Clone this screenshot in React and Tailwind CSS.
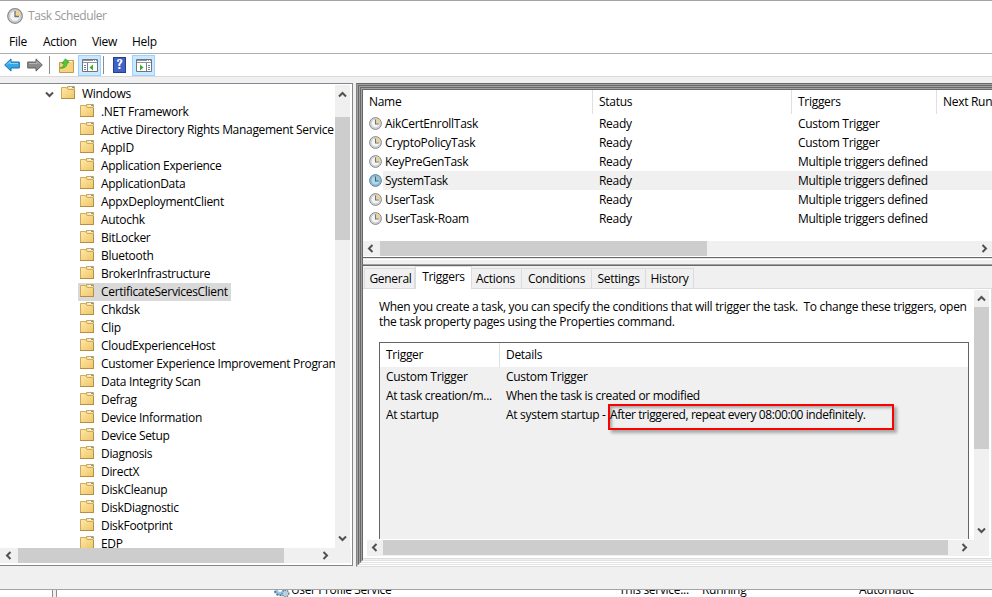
import React from 'react';

const folders = [
  '.NET Framework',
  'Active Directory Rights Management Service',
  'AppID',
  'Application Experience',
  'ApplicationData',
  'AppxDeploymentClient',
  'Autochk',
  'BitLocker',
  'Bluetooth',
  'BrokerInfrastructure',
  'CertificateServicesClient',
  'Chkdsk',
  'Clip',
  'CloudExperienceHost',
  'Customer Experience Improvement Program',
  'Data Integrity Scan',
  'Defrag',
  'Device Information',
  'Device Setup',
  'Diagnosis',
  'DirectX',
  'DiskCleanup',
  'DiskDiagnostic',
  'DiskFootprint',
  'EDP',
];

const tasks = [
  { name: 'AikCertEnrollTask', trigger: 'Custom Trigger' },
  { name: 'CryptoPolicyTask', trigger: 'Custom Trigger' },
  { name: 'KeyPreGenTask', trigger: 'Multiple triggers defined' },
  { name: 'SystemTask', trigger: 'Multiple triggers defined', selected: true },
  { name: 'UserTask', trigger: 'Multiple triggers defined' },
  { name: 'UserTask-Roam', trigger: 'Multiple triggers defined' },
];

const tabs = [
  { label: 'General', width: 'w-[51px] pl-[2px]' },
  { label: 'Triggers', width: 'w-[57px]', active: true },
  { label: 'Actions', width: 'w-[50px] pr-[2px]' },
  { label: 'Conditions', width: 'w-[70px]' },
  { label: 'Settings', width: 'w-[54px]' },
  { label: 'History', width: 'w-[48px]' },
];

const FolderIcon = () => (
  <svg width="15" height="14" viewBox="0 0 15 14" className="-mt-[2px] shrink-0">
    <defs>
      <linearGradient id="folder" x1="0" y1="0" x2="1" y2="1">
        <stop offset="0" stopColor="#ffe9a8" />
        <stop offset="1" stopColor="#efc567" />
      </linearGradient>
    </defs>
    <path d="M6.5 3V.5H13.5V3" fill="#f7e3ae" stroke="#c9a458" />
    <path d="M9 1.5H11" stroke="#fff" />
    <path d="M11 1.5H13" stroke="#4aa3dc" />
    <path d="M.5 1.5H5.5L7 3.5H13.5V12.5H.5Z" fill="url(#folder)" stroke="#d0aa5c" />
    <path d="M0 12.5H14M13.5 4V13" stroke="#b58f45" />
  </svg>
);

const ClockIcon = ({ size = 13, selected }) => (
  <svg width={size} height={size} viewBox="0 0 16 16" className="shrink-0">
    <circle cx="8" cy="8" r="7.3" fill={selected ? '#8db9d8' : '#d5d7d9'} stroke={selected ? '#5d8aa8' : '#88898b'} strokeWidth="1.2" />
    <circle cx="8" cy="8" r="5.4" fill={selected ? '#b5d7ec' : '#f3f4f5'} stroke={selected ? '#7da8c5' : '#b5b8ba'} strokeWidth=".7" />
    <path d="M8 8V2.4A5.6 5.6 0 0 1 13.6 8Z" fill={selected ? '#9fc4cf' : '#f1d38a'} />
    <path d="M8 3V8.5H12" fill="none" stroke={selected ? '#35617c' : '#6a747d'} strokeWidth="1.3" />
  </svg>
);

const arrowPaths = {
  up: 'M1 6.5L4.5 3L8 6.5',
  down: 'M1 2.5L4.5 6L8 2.5',
  left: 'M6.5 1L3 4.5L6.5 8',
  right: 'M2.5 1L6 4.5L2.5 8',
};

const Chevron = ({ dir, className = '' }) => (
  <svg width="9" height="9" viewBox="0 0 9 9" className={`shrink-0 ${className}`}>
    <path d={arrowPaths[dir]} fill="none" stroke="#505050" strokeWidth="2" />
  </svg>
);

const BlueArrow = () => (
  <svg width="16" height="14" viewBox="0 0 16 14">
    <path d="M.7 7L7 .9V4H15.3V10H7V13.1Z" fill="#35a7e8" stroke="#1b6ca8" />
    <path d="M3 6.5L6 3.5V5.5H14" fill="none" stroke="#8bd4fa" />
  </svg>
);

const GrayArrow = () => (
  <svg width="16" height="14" viewBox="0 0 16 14">
    <path d="M15.3 7L9 .9V4H.7V10H9V13.1Z" fill="#8b8b8b" stroke="#606060" />
    <path d="M2 5.5H10V3.5L13 6.5" fill="none" stroke="#b5b5b5" />
  </svg>
);

const UpFolderIcon = () => (
  <svg width="15" height="15" viewBox="0 0 15 15">
    <path d="M.5 4.5H8V2.5H14.5V14.5H.5Z" fill="#f5d47d" stroke="#c39a49" />
    <path d="M10 3.5H13" stroke="#fff" />
    <path d="M1 10C3.5 9.5 4.8 8 5 5.5L3 5.3L6.5 .8L10 4.5L8 5C8 8.5 5.5 10.8 1 10Z" fill="#52c93a" stroke="#2c9a22" strokeWidth=".7" />
  </svg>
);

const PaneIcon = ({ right }) => (
  <svg width="16" height="13" viewBox="0 0 16 13">
    <path d="M.5 .5H15.5V12.5H.5Z" fill="#fff" stroke="#70757c" />
    <path d="M1 1.5H15M1 3.5H15" stroke="#8f959c" />
    <path d="M11 1.5H12M13 1.5H14" stroke="#fff" />
    {right ? (
      <>
        <path d="M10.5 4V12M12 6.5H14M12 8.5H14M12 10.5H14" stroke="#70809a" />
        <path d="M4 5.5V11.5L7.5 8.5Z" fill="#3cab2e" />
      </>
    ) : (
      <>
        <path d="M5.5 4V12M2 6.5H4M2 8.5H4M2 10.5H4" stroke="#70809a" />
        <path d="M11 5.5V11.5L7.5 8.5Z" fill="#3cab2e" />
      </>
    )}
  </svg>
);

const GearsIcon = () => (
  <svg width="17" height="16" viewBox="0 0 17 16" className="shrink-0">
    <circle cx="7" cy="8" r="5.2" fill="#9bc3e2" stroke="#527f9f" strokeWidth="2" strokeDasharray="2 1.2" />
    <circle cx="7" cy="8" r="2" fill="#fff" />
    <circle cx="12.5" cy="11.5" r="3.3" fill="#b7d0e1" stroke="#62839a" strokeWidth="1.4" strokeDasharray="1.4 1" />
  </svg>
);

const HScroll = ({ thumb, className = '', end = 'mr-[5px]' }) => (
  <div className={`flex h-[15px] items-center bg-[#f0f0f0] ${className}`}>
    <Chevron dir="left" className="mr-[5px] ml-[3px]" />
    <div className={`h-full bg-[#cdcdcd] ${thumb}`} />
    <Chevron dir="right" className={`ml-auto ${end}`} />
  </div>
);

const VScroll = ({ thumb, className = '' }) => (
  <div className={`flex w-[15px] flex-col items-center bg-[#f0f0f0] ${className}`}>
    <Chevron dir="up" className="mt-1 mb-1" />
    <div className={`w-full bg-[#cdcdcd] ${thumb}`} />
    <Chevron dir="down" className="mt-auto mb-[5px]" />
  </div>
);

const Tree = () => (
  <div className="flex w-[353px] shrink-0 flex-col border-t border-r border-b border-[#828790] bg-white pt-px pr-px tracking-[-0.31px]">
    <div className="flex h-[463px]">
      <div className="w-[335px] overflow-hidden">
        <div className="flex h-[18px] items-center pl-[45px]">
          <Chevron dir="down" className="mt-px mr-[7px]" />
          <FolderIcon />
          <span className="ml-[6px]">Windows</span>
        </div>
        {folders.map((name) => (
          <div key={name} className="flex h-[18px] items-center pl-[78px]">
            <div className={`flex h-full items-center pr-[3px] pl-[2px] ${name === 'CertificateServicesClient' ? 'bg-[#d9d9d9]' : ''}`}>
              <FolderIcon />
              <span className="ml-[6px]">{name}</span>
            </div>
          </div>
        ))}
      </div>
      <VScroll className="pt-px" thumb="mt-[14px] h-[123px]" />
    </div>
    <div className="flex bg-[#f0f0f0]">
      <HScroll className="w-[335px] pl-px" thumb="w-[266px]" />
    </div>
  </div>
);

const TaskList = () => (
  <div className="flex h-[168px] flex-col border-b border-[#696969] bg-white">
    <div className="flex h-6 items-center">
      <span className="w-[229px] pl-[6px]">Name</span>
      <span className="flex h-6 w-[199px] items-center border-l border-[#e0e0e0] pl-[6px]">Status</span>
      <span className="flex h-6 w-[145px] items-center border-l border-[#e0e0e0] pl-[6px]">Triggers</span>
      <span className="flex h-6 flex-1 items-center overflow-hidden border-l border-[#e0e0e0] pl-[6px]">Next Run</span>
    </div>
    {tasks.map((task) => (
      <div key={task.name} className="flex h-[19px] items-center pl-[6px] leading-[19px]">
        <ClockIcon selected={task.selected} />
        <div className={`ml-px flex h-full flex-1 items-center pl-[2px] ${task.selected ? 'bg-[#f0f0f0]' : ''}`}>
          <span className="w-[214px]">{task.name}</span>
          <span className="w-[199px]">Ready</span>
          <span>{task.trigger}</span>
        </div>
      </div>
    ))}
    <HScroll className="mt-auto mb-px" thumb="w-[327px]" end="mr-[3px]" />
  </div>
);

const TriggerTable = () => (
  <div className="flex h-[197px] w-[590px] flex-col border-x border-t border-[#646464] bg-[#f0f0f0] leading-[19px]">
    <div className="flex h-6 bg-white leading-[18px]">
      <span className="flex w-[119px] items-center pl-[6px]">Trigger</span>
      <span className="flex items-center border-l border-[#e0e0e0] pl-[6px]">Details</span>
    </div>
    <div className="flex h-[19px] items-center pl-[6px]">
      <span className="w-[120px]">Custom Trigger</span>
      <span>Custom Trigger</span>
    </div>
    <div className="flex h-[19px] items-center pl-[6px]">
      <span className="w-[120px]">At task creation/m...</span>
      <span className="tracking-[-0.33px]">When the task is created or modified</span>
    </div>
    <div className="flex h-[19px] items-center pl-[6px]">
      <span className="w-[120px]">At startup</span>
      <span className="w-[104px]">At system startup -</span>
      <span className="relative tracking-[-0.41px]">
        After triggered, repeat every 08:00:00 indefinitely.
        <span className="absolute top-[-1px] left-[-2px] h-[26px] w-[286px] border-2 border-[#fe0000] shadow-[3px_3px_3px_rgba(0,0,0,0.3),inset_2px_2px_3px_rgba(0,0,0,0.3)]" />
      </span>
    </div>
  </div>
);

const Details = () => (
  <div className="flex flex-1 flex-col border-t border-[#696969] bg-[#f0f0f0]">
    <div className="flex h-[22px] items-end pl-px">
      {tabs.map((tab) => (
        <div
          key={tab.label}
          className={`flex shrink-0 justify-center whitespace-nowrap ${tab.width} ${
            tab.active
              ? 'relative z-10 -mb-px h-[23px] border-x border-t border-[#dcdcdc] bg-white pt-px'
              : 'h-5 border-t border-r border-[#dcdcdc] pt-px first:border-l'
          }`}
        >
          {tab.label}
        </div>
      ))}
    </div>
    <div className="mb-px flex flex-1 border-t border-r border-b border-[#dcdcdc] bg-white pt-px pb-[2px]">
      <div className="flex w-[611px] flex-col pl-1">
        <div className="flex-1 pl-3">
          <p className="mt-[9px] mb-[13px] leading-[15px] whitespace-pre">
            {'When you create a task, you can specify the conditions that will trigger the task.  To change these triggers, open\nthe task property pages using the Properties command.'}
          </p>
          <TriggerTable />
        </div>
        <div className="bg-[#f0f0f0] pb-px">
          <HScroll thumb="-ml-px w-[565px]" end="mr-[5px]" />
        </div>
      </div>
      <div className="flex w-[15px] flex-col bg-[#f0f0f0] pb-4">
        <VScroll className="flex-1" thumb="h-[142px]" />
      </div>
    </div>
  </div>
);

const App = () => {
  return (
    <div className="flex h-[597px] w-[992px] flex-col overflow-hidden bg-white font-['Open_Sans','Noto_Sans',sans-serif] text-[12px] leading-[18px] tracking-[-0.29px] whitespace-nowrap text-black">
      <div className="h-px bg-[#a3a3a3]" />

      {/* Title bar */}
      <div className="flex h-[30px] items-center pl-[7px] text-[#999999]">
        <ClockIcon size={16} />
        <span className="ml-[5px] tracking-[-0.4px]">Task Scheduler</span>
      </div>

      {/* Menu */}
      <div className="flex h-[23px] items-center border-b border-[#b0b0b0] pl-[9px]">
        <span className="w-[34px]">File</span>
        <span className="w-[49px]">Action</span>
        <span className="w-10">View</span>
        <span>Help</span>
      </div>

      {/* Toolbar */}
      <div className="flex h-[23px] items-center border-b border-[#dadada] pl-1">
        <BlueArrow />
        <span className="w-[7px]" />
        <GrayArrow />
        <span className="mx-[6px] h-[18px] w-px bg-[#8c8c8c]" />
        <span className="ml-[3px]">
          <UpFolderIcon />
        </span>
        <span className="ml-1 flex h-[21px] w-[23px] items-center justify-center border border-[#99d1ff] bg-[#cce8ff]">
          <PaneIcon />
        </span>
        <span className="ml-[2px] h-[18px] w-px bg-[#8c8c8c]" />
        <span className="ml-[9px] flex h-4 w-[13px] items-center justify-center border border-[#23408f] bg-[#3f62c4] font-serif text-[14px] font-bold text-white">?</span>
        <span className="ml-[6px] flex h-[21px] w-[23px] items-center justify-center border border-[#99d1ff] bg-[#cce8ff]">
          <PaneIcon right />
        </span>
      </div>

      {/* Console body */}
      <div className="flex h-[490px] bg-[#f0f0f0] pt-[6px]">
        <div className="flex h-[483px]">
          <Tree />
        </div>
        <div className="ml-[3px] flex h-[484px] flex-1 border-t border-b border-l border-t-[#696969] border-b-[#dcdcdc] border-l-[#858585]">
          <div className="flex flex-1 border-t border-b border-l border-t-[#a0a0a0] border-b-white border-l-[#a0a0a0]">
            <div className="flex flex-1 border-t border-b border-l border-t-[#696969] border-b-[#e3e3e3] border-l-[#696969]">
              <div className="flex flex-1 border-t border-b border-l border-t-[#a0a0a0] border-b-white border-l-[#a0a0a0]">
                <div className="flex flex-1 border-t border-b border-l border-t-[#696969] border-b-[#e3e3e3] border-l-[#696969]">
                  <div className="flex flex-1 border-t border-b border-l border-t-[#a0a0a0] border-b-white border-l-[#a0a0a0]">
                    <div className="flex w-[630px] flex-1 flex-col border-t border-b border-l border-t-[#696969] border-b-[#e3e3e3] border-l-[#696969]">
                      <TaskList />
                      <div className="h-[7px] border-b border-[#a0a0a0] bg-[#f0f0f0]">
                        <div className="h-[2px] border-t border-[#e3e3e3] bg-white" />
                      </div>
                      <Details />
                    </div>
                  </div>
                </div>
              </div>
            </div>
          </div>
        </div>
      </div>

      {/* Status bar */}
      <div className="h-[23px] border-b border-[#a3a3a3] bg-[#f0f0f0]" />

      {/* Services window behind */}
      <div className="flex h-[7px] overflow-hidden pl-[52px]">
        <div className="w-[5px] border-x border-[#8c8c8c] bg-[#f0f0f0]" />
        <div className="-mt-[9px] ml-[216px] flex h-[18px] items-center">
          <GearsIcon />
          <span className="ml-px w-[328px] tracking-[-0.4px]">User Profile Service</span>
          <span className="w-[83px]">This service...</span>
          <span className="w-[157px]">Running</span>
          <span>Automatic</span>
        </div>
      </div>
    </div>
  );
};

export default App;
